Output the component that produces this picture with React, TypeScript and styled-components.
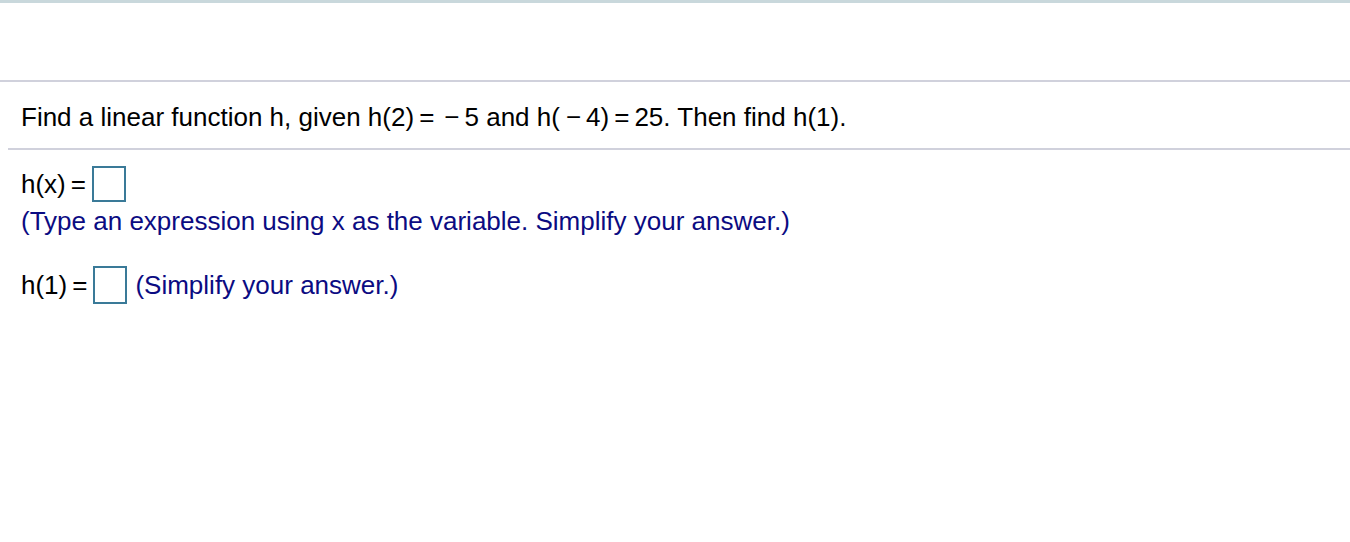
import React from "react";
import styled, { createGlobalStyle } from "styled-components";

const Global = createGlobalStyle`
  html, body { margin: 0; padding: 0; background: #ffffff; }
  body { font-family: Arial, "Liberation Sans", sans-serif; }
`;

const Page = styled.div`
  width: 1350px;
  height: 542px;
  display: flex;
  flex-direction: column;
`;

const TopBar = styled.div`
  height: 3px;
  background: #c9d8dc;
`;

const Spacer = styled.div`
  height: 77px;
`;

const Rule = styled.div<{ $inset?: number }>`
  height: 2px;
  margin-left: ${(p) => p.$inset ?? 0}px;
  background: #d0d1dc;
`;

const Question = styled.div`
  height: 66px;
  display: flex;
  align-items: center;
  padding-left: 21px;
  padding-top: 4px;
  box-sizing: border-box;
  font-size: 26px;
  line-height: 30px;
  color: #000000;
  white-space: nowrap;
`;

const Answers = styled.div`
  display: flex;
  flex-direction: column;
  padding-left: 21px;
  padding-top: 15px;
`;

const Row = styled.div<{ $mt?: number }>`
  display: flex;
  align-items: center;
  margin-top: ${(p) => p.$mt ?? 0}px;
  height: 37px;
  font-size: 26px;
  line-height: 30px;
`;

const Label = styled.span`
  color: #000000;
`;

const Box = styled.span<{ $h?: number }>`
  display: inline-block;
  width: 30px;
  height: ${(p) => p.$h ?? 32}px;
  border: 2px solid #3a7a98;
  margin-left: 6px;
`;

const Hint = styled.span`
  color: #0b0b82;
  font-size: 26px;
`;

const HintLine = styled.div`
  color: #0b0b82;
  font-size: 26px;
  line-height: 30px;
  margin-top: 4px;
`;

const Sp = styled.span<{ $w: number }>`
  display: inline-block;
  width: ${(p) => p.$w}px;
`;

export default function App() {
  return (
    <>
      <Global />
      <Page>
        <TopBar />
        <Spacer />
        <Rule />
        <Question>
          Find a linear function h, given h(2)<Sp $w={5} />=<Sp $w={10} />−<Sp $w={5} />5 and h(<Sp $w={6} />−<Sp $w={5} />4)<Sp $w={5} />=<Sp $w={5} />25. Then find h(1).
        </Question>
        <Rule $inset={8} />
        <Answers>
          <Row>
            <Label>h(x)<Sp $w={5} />=</Label>
            <Box />
          </Row>
          <HintLine>(Type an expression using x as the variable. Simplify your answer.)</HintLine>
          <Row $mt={30}>
            <Label>h(1)<Sp $w={5} />=</Label>
            <Box $h={34} />
            <Sp $w={8} />
            <Hint>(Simplify your answer.)</Hint>
          </Row>
        </Answers>
      </Page>
    </>
  );
}
